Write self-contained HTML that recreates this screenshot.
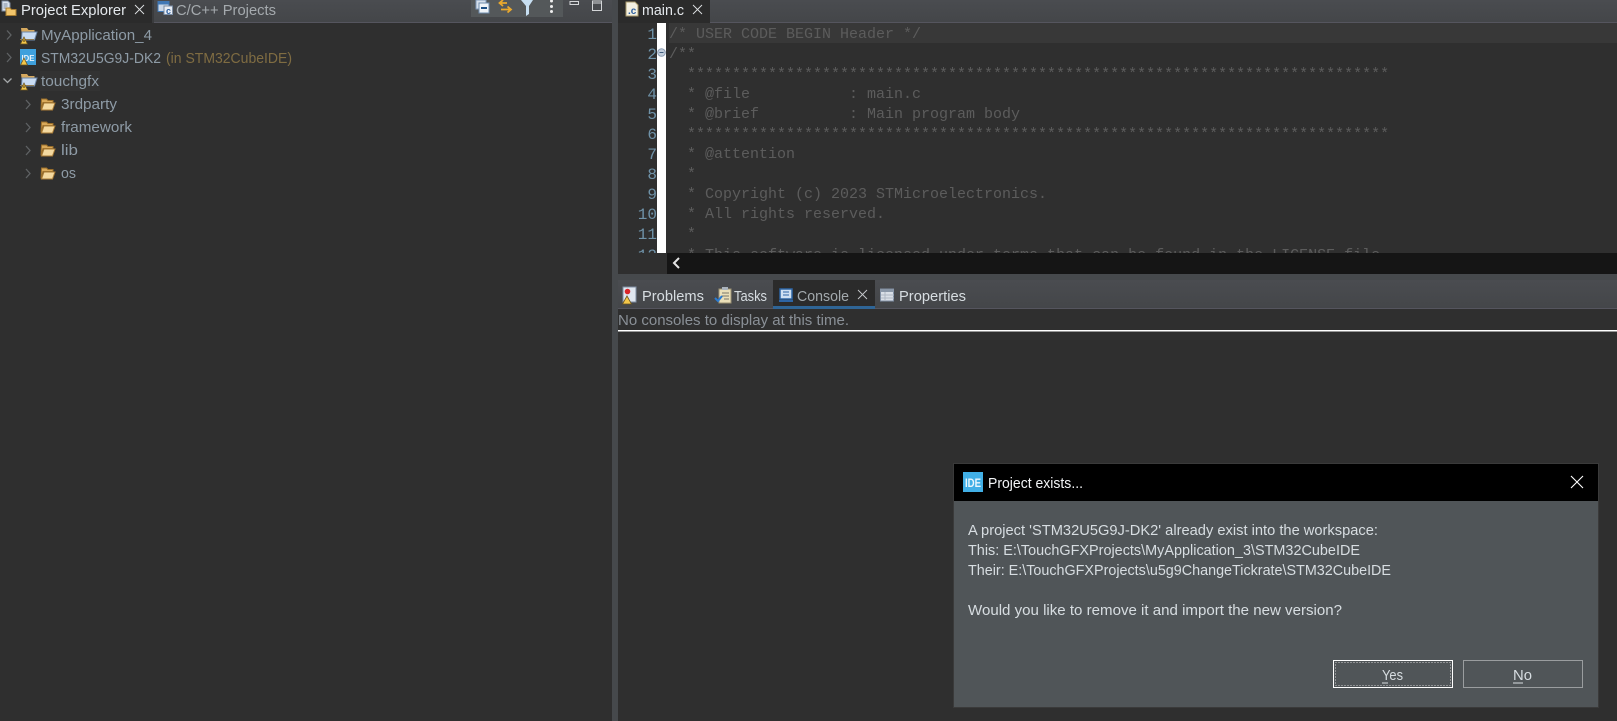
<!DOCTYPE html>
<html lang="en">
<head>
<meta charset="utf-8">
<title>STM32CubeIDE</title>
<style>
html,body{margin:0;padding:0;width:1617px;height:721px;overflow:hidden;background:#2f2f2f}
svg{display:block}
text{font-family:"Liberation Sans",sans-serif;font-size:14.5px;white-space:pre}
.m{font-family:"Liberation Mono",monospace;font-size:15px;fill:#5c5c5c}
.n{font-family:"Liberation Mono",monospace;font-size:16px;fill:#6f92a8;text-anchor:end}
.t{fill:#8e9ba6}
.w{fill:#e4e8ec}
.g{fill:#a3a9ad}
.d{fill:#d7dde1}
</style>
</head>
<body>
<svg width="1617" height="721" viewBox="0 0 1617 721" xmlns="http://www.w3.org/2000/svg">
<defs>
<linearGradient id="hd" x1="0" y1="0" x2="0" y2="1"><stop offset="0" stop-color="#4a4c50"/><stop offset="1" stop-color="#444649"/></linearGradient>
<g id="chev"><path d="M0 0l4 4.500l-4 4.500" fill="none" stroke="#5f6264" stroke-width="1.300"/></g>
<g id="fold">
<path d="M0.500 2h5l1.500 1.500h5v2h-10l-2 7z" fill="#d9a95a" stroke="#9a6e2a" stroke-width="1"/>
<path d="M3 6h11l-2.500 7h-11z" fill="#f4d9a0" stroke="#a87a34" stroke-width="1"/>
</g>
<g id="proj">
<path d="M1 1h6l1.500 2h6v2h-13z" fill="#d6a95f"/>
<path d="M2 5h15l-2.500 8h-13z" fill="#c9dcf3" stroke="#6d87a8" stroke-width="1"/>
<path d="M0 12h14v1h-14z" fill="#8f7a52"/>
<path d="M4 10l3.500 7h-7z" fill="#f3c74a" stroke="#6a5320" stroke-width=".8"/>
<path d="M4 12.500v2.500" stroke="#3d2f10" stroke-width="1"/>
</g>
</defs>

<!-- base -->
<rect width="1617" height="721" fill="#2f2f2f"/>

<!-- left header -->
<rect x="0" y="0" width="612" height="22" fill="url(#hd)"/>
<rect x="0" y="22" width="612" height="1" fill="#55555e"/>
<rect x="0" y="0" width="152" height="23" fill="#2b2b2b"/>
<rect x="152" y="0" width="2" height="23" fill="#3a3b3d"/>

<!-- project explorer tab icon -->
<path d="M2 1h6l2 2v8h-8z" fill="#dbe3ee" stroke="#7d8ba0" stroke-width="1"/>
<path d="M3.500 4h4M3.500 6h4M3.500 8h4" stroke="#7d8ba0" stroke-width="1"/>
<path d="M6 8h4l1.500 1.500h4.500v6h-10z" fill="#f2c56b" stroke="#a77c2f" stroke-width="1"/>
<text x="21" y="15" class="w" textLength="105" lengthAdjust="spacingAndGlyphs">Project Explorer</text>
<path d="M135 5l9 9M144 5l-9 9" stroke="#dfe2e4" stroke-width=".9"/>

<!-- c/c++ tab -->
<rect x="158" y="1.500" width="11" height="10" fill="#c9d7e8" stroke="#3f77b5" stroke-width="1"/>
<rect x="158" y="1.500" width="11" height="3" fill="#3f77b5"/>
<rect x="164" y="6" width="8.500" height="8.500" fill="#e9eef5" stroke="#7a8ca3" stroke-width="1"/>
<text x="166" y="14" style="font-size:9px;font-weight:bold" fill="#2d5f9e">c</text>
<text x="176" y="15" fill="#a5aaae" textLength="100" lengthAdjust="spacingAndGlyphs">C/C++ Projects</text>

<!-- toolbar -->
<rect x="471" y="0" width="92" height="17" fill="#54585a"/>
<rect x="476" y="0" width="10" height="9" fill="#d5dfeb" stroke="#7e98b8"/>
<rect x="479" y="3" width="10" height="10" fill="#eef3f8" stroke="#6e8cae"/>
<path d="M481 8h6" stroke="#1c4f85" stroke-width="2"/>
<path d="M507 3h-7M503 0l-3.500 3l3.500 3" fill="none" stroke="#e9a82c" stroke-width="1.800"/>
<path d="M501 9.500h10M507.500 6.500l3.500 3l-3.500 3" fill="none" stroke="#e9a82c" stroke-width="1.800"/>
<path d="M521 0h12l-4 6v8l-3 2v-10z" fill="#c7dff2"/>
<circle cx="551.500" cy="1" r="1.500" fill="#eee"/><circle cx="551.500" cy="6.500" r="1.500" fill="#eee"/><circle cx="551.500" cy="11.500" r="1.500" fill="#eee"/>
<rect x="570" y="1.500" width="8.500" height="3" fill="none" stroke="#d4d6d8"/>
<rect x="592.500" y="1" width="9" height="9.500" fill="none" stroke="#d4d6d8"/>
<path d="M592 3h10" stroke="#d4d6d8"/>

<!-- tree -->
<use href="#chev" x="7" y="30.500"/>
<use href="#proj" x="20" y="27"/>
<text x="41" y="40" class="t" textLength="111" lengthAdjust="spacingAndGlyphs">MyApplication_4</text>

<use href="#chev" x="7" y="53"/>
<rect x="20" y="49" width="16" height="16" fill="#3fa0dc"/>
<text x="21.500" y="61" style="font-size:8.500px;font-weight:bold" fill="#e7f3fb" textLength="13" lengthAdjust="spacingAndGlyphs">IDE</text>
<path d="M24 58l3.500 7h-7z" fill="#f3c74a" stroke="#6a5320" stroke-width=".8"/>
<text x="41" y="63" class="t" textLength="120" lengthAdjust="spacingAndGlyphs">STM32U5G9J-DK2</text>
<text x="166" y="63" fill="#7f6c42" textLength="126" lengthAdjust="spacingAndGlyphs">(in STM32CubeIDE)</text>

<rect x="40" y="71" width="60" height="20" fill="#333"/>
<path d="M3.500 78.500l4 4l4-4" fill="none" stroke="#a4a7a9" stroke-width="1.300"/>
<use href="#proj" x="20" y="73"/>
<text x="41" y="86" class="t" textLength="58" lengthAdjust="spacingAndGlyphs">touchgfx</text>

<use href="#chev" x="26" y="100"/><use href="#fold" x="41" y="97"/>
<text x="61" y="109" class="t" textLength="56" lengthAdjust="spacingAndGlyphs">3rdparty</text>
<use href="#chev" x="26" y="123"/><use href="#fold" x="41" y="120"/>
<text x="61" y="132" class="t" textLength="71" lengthAdjust="spacingAndGlyphs">framework</text>
<use href="#chev" x="26" y="146"/><use href="#fold" x="41" y="143"/>
<text x="61" y="155" class="t" textLength="17" lengthAdjust="spacingAndGlyphs">lib</text>
<use href="#chev" x="26" y="169"/><use href="#fold" x="41" y="166"/>
<text x="61" y="178" class="t" textLength="15" lengthAdjust="spacingAndGlyphs">os</text>

<!-- vertical sash -->
<rect x="612" y="0" width="6" height="721" fill="#46494c"/>

<!-- editor header -->
<rect x="618" y="0" width="999" height="22" fill="url(#hd)"/>
<rect x="618" y="22" width="999" height="1" fill="#55555e"/>
<rect x="618" y="0" width="92" height="23" fill="#2b2b2b"/>
<path d="M626 2h9l3 3v11h-12z" fill="#f3f0e2" stroke="#a99a6b" stroke-width="1"/>
<text x="628" y="14" style="font-size:10px;font-weight:bold" fill="#2d5f9e">.c</text>
<text x="642" y="15" class="w" textLength="42" lengthAdjust="spacingAndGlyphs">main.c</text>
<path d="M693 5l9 9M702 5l-9 9" stroke="#dfe2e4" stroke-width=".9"/>

<!-- editor -->
<rect x="618" y="23" width="999" height="250" fill="#2f2f2f"/>
<rect x="669" y="23" width="948" height="20" fill="#383838"/>
<rect x="657" y="23" width="9" height="230" fill="#ffffff"/>
<circle cx="661.500" cy="52.500" r="3.800" fill="#c3cedb" stroke="#8a9cb2"/>
<path d="M659.500 52.500h4" stroke="#3f5c7c"/>

<text class="n" x="657" y="39">1</text>
<text class="n" x="657" y="59">2</text>
<text class="n" x="657" y="79">3</text>
<text class="n" x="657" y="99">4</text>
<text class="n" x="657" y="119">5</text>
<text class="n" x="657" y="139">6</text>
<text class="n" x="657" y="159">7</text>
<text class="n" x="657" y="179">8</text>
<text class="n" x="657" y="199">9</text>
<text class="n" x="657" y="219">10</text>
<text class="n" x="657" y="239">11</text>

<text class="m" x="669" y="38">/* USER CODE BEGIN Header */</text>
<text class="m" x="669" y="58">/**</text>
<text class="m" x="669" y="78">  ******************************************************************************</text>
<text class="m" x="669" y="98">  * @file           : main.c</text>
<text class="m" x="669" y="118">  * @brief          : Main program body</text>
<text class="m" x="669" y="138">  ******************************************************************************</text>
<text class="m" x="669" y="158">  * @attention</text>
<text class="m" x="669" y="178">  *</text>
<text class="m" x="669" y="198">  * Copyright (c) 2023 STMicroelectronics.</text>
<text class="m" x="669" y="218">  * All rights reserved.</text>
<text class="m" x="669" y="238">  *</text>
<text class="m" x="669" y="259">  * This software is licensed under terms that can be found in the LICENSE file</text>
<text class="n" x="657" y="260">12</text>
<rect x="618" y="253" width="49" height="20" fill="#2f2f2f"/>
<rect x="657" y="246" width="9" height="7" fill="#ffffff"/>
<rect x="667" y="253" width="950" height="21" fill="#151515"/>
<path d="M679 258l-5 5l5 5" fill="none" stroke="#e4e4e4" stroke-width="2"/>

<!-- horizontal sash -->
<rect x="618" y="274" width="999" height="6" fill="#46494c"/>

<!-- console tabs -->
<rect x="618" y="280" width="999" height="29" fill="url(#hd)"/>
<rect x="618" y="308" width="999" height="1" fill="#55555e"/>
<rect x="773" y="280" width="102" height="26" fill="#2b2b2b"/>
<rect x="773" y="306" width="102" height="3" fill="#2f6596"/>

<rect x="623" y="287" width="13" height="15" fill="#dfe6ef" stroke="#7f8ea3"/>
<circle cx="627.500" cy="291.500" r="2.800" fill="#d9252a"/>
<path d="M627 296l4.500 8h-9z" fill="#f3c74a" stroke="#6a5320" stroke-width=".8"/>
<text x="642" y="301" class="d" textLength="62" lengthAdjust="spacingAndGlyphs">Problems</text>

<rect x="719" y="289" width="12" height="14" fill="#eadfb9" stroke="#9a9073"/>
<rect x="722" y="287" width="6" height="3" fill="#aab3bd"/>
<path d="M722 293h7M722 296h7M724 299h5" stroke="#7b776a"/>
<path d="M715 298l3 3l4-5" fill="none" stroke="#2a7bd1" stroke-width="2"/>
<text x="734" y="301" class="d" textLength="33" lengthAdjust="spacingAndGlyphs">Tasks</text>

<rect x="780" y="289" width="12" height="10" fill="#cfe0f2" stroke="#2d65a5" stroke-width="1.500"/>
<path d="M783 292h6M783 295h6" stroke="#2d65a5"/>
<rect x="779" y="300" width="14" height="2" fill="#2d65a5"/>
<text x="797" y="301" class="g" textLength="52" lengthAdjust="spacingAndGlyphs">Console</text>
<path d="M858 290l9 9M867 290l-9 9" stroke="#c7cacc" stroke-width=".9"/>

<rect x="880.500" y="289" width="13" height="12" fill="#d9dfe7" stroke="#7f8ea3"/>
<rect x="880" y="289" width="14" height="3" fill="#8a97a8"/>
<path d="M885 292v9M881 295h13M881 298h13" stroke="#aeb7c3"/>
<text x="899" y="301" class="d" textLength="67" lengthAdjust="spacingAndGlyphs">Properties</text>

<!-- console body -->
<text x="618" y="325" fill="#8a9097" textLength="231" lengthAdjust="spacingAndGlyphs">No consoles to display at this time.</text>
<rect x="618" y="330" width="999" height="1.500" fill="#ffffff"/>

<!-- dialog -->
<rect x="953.500" y="463.500" width="645" height="244" fill="#505558" stroke="#3a3a3a"/>
<rect x="954" y="464" width="644" height="37" fill="#000000"/>
<rect x="963" y="472" width="20" height="20" fill="#41afe6"/>
<text x="965" y="487" style="font-size:11.500px;font-weight:bold" fill="#e9f6fd" textLength="16" lengthAdjust="spacingAndGlyphs">IDE</text>
<text x="988" y="488" fill="#f2f4f6" textLength="95" lengthAdjust="spacingAndGlyphs">Project exists...</text>
<path d="M1571 476l12 12M1583 476l-12 12" stroke="#ffffff" stroke-width="1.100"/>

<text x="968" y="535" class="d" textLength="410" lengthAdjust="spacingAndGlyphs">A project 'STM32U5G9J-DK2' already exist into the workspace:</text>
<text x="968" y="555" class="d" textLength="392" lengthAdjust="spacingAndGlyphs">This: E:\TouchGFXProjects\MyApplication_3\STM32CubeIDE</text>
<text x="968" y="575" class="d" textLength="423" lengthAdjust="spacingAndGlyphs">Their: E:\TouchGFXProjects\u5g9ChangeTickrate\STM32CubeIDE</text>
<text x="968" y="615" class="d" textLength="374" lengthAdjust="spacingAndGlyphs">Would you like to remove it and import the new version?</text>

<rect x="1333.500" y="660.500" width="119" height="27" fill="none" stroke="#ffffff"/>
<rect x="1335.500" y="662.500" width="115" height="23" fill="none" stroke="#cfcfcf" stroke-dasharray="1 2"/>
<text x="1382" y="680" class="d" textLength="21" lengthAdjust="spacingAndGlyphs">Yes</text>
<path d="M1382 683h6" stroke="#d7dde1"/>
<rect x="1463.500" y="660.500" width="119" height="27" fill="none" stroke="#9a9d9f"/>
<text x="1513" y="680" class="d" textLength="19" lengthAdjust="spacingAndGlyphs">No</text>
<path d="M1513 683h10" stroke="#d7dde1"/>
</svg>
</body>
</html>
